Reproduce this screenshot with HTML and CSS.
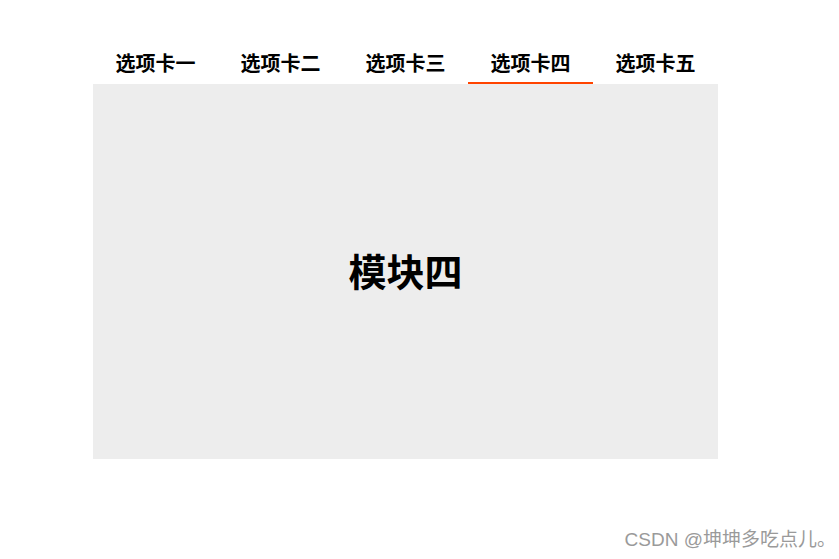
FILE: index.html
```html
<!DOCTYPE html>
<html lang="zh-CN">
<head>
<meta charset="utf-8">
<title>选项卡</title>
<link rel="stylesheet" href="styles.css">
</head>
<body>
<div class="tabs-wrap">
  <ul class="tab-list">
    <li class="tab">选项卡一</li>
    <li class="tab">选项卡二</li>
    <li class="tab">选项卡三</li>
    <li class="tab active">选项卡四</li>
    <li class="tab">选项卡五</li>
  </ul>
  <div class="panel">模块四</div>
</div>
<div class="watermark">CSDN @坤坤多吃点儿。</div>
</body>
</html>
```
FILE: styles.css
```css
html, body {
  margin: 0;
  padding: 0;
  background: #fff;
}
body {
  width: 839px;
  height: 559px;
  position: relative;
  overflow: hidden;
  font-family: "Noto Sans CJK SC", "Liberation Sans", sans-serif;
}
.tabs-wrap {
  width: 625px;
  margin: 44px 0 0 93px;
}
.tab-list {
  list-style: none;
  margin: 0;
  padding: 0;
  display: flex;
}
.tab {
  width: 125px;
  height: 40px;
  box-sizing: border-box;
  line-height: 38px;
  text-align: center;
  font-size: 20px;
  font-weight: bold;
  color: #000;
  border-bottom: 2px solid transparent;
}
.tab.active {
  border-bottom-color: #ff4400;
}
.panel {
  height: 375px;
  box-sizing: border-box;
  padding-bottom: 4px;
  background: #ededed;
  display: flex;
  align-items: center;
  justify-content: center;
  font-size: 38px;
  font-weight: bold;
  color: #000;
}
.watermark {
  position: absolute;
  right: 3px;
  bottom: 8px;
  font-family: "Liberation Sans", "Noto Sans CJK SC", sans-serif;
  font-size: 19px;
  color: #9a9a9a;
  text-shadow: 0 0 1px #fff;
}
```
